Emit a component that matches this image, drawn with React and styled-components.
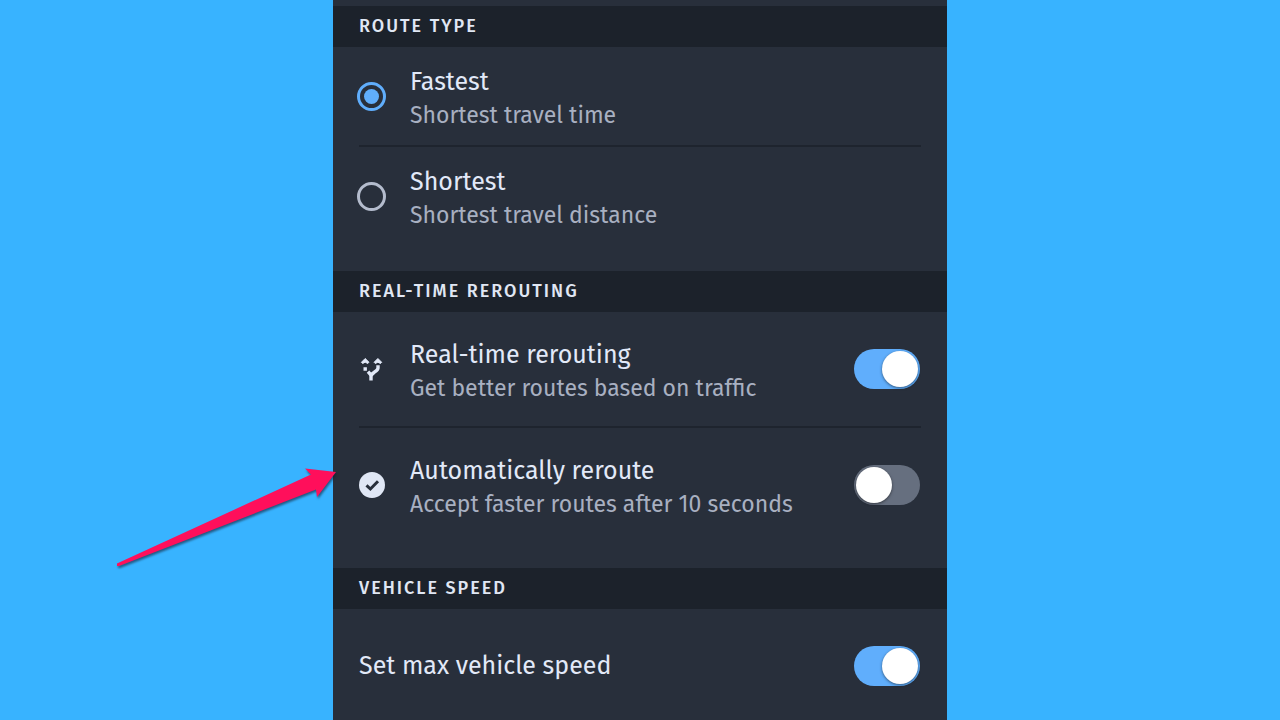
import React, { useState } from 'react';
import styled, { createGlobalStyle } from 'styled-components';

//STYLED COMPONENTS

const GlobalStyle = createGlobalStyle`
	* {
		box-sizing: border-box;
	}
	body {
		margin: 0;
		background: #38b3ff;
		font-family: "Fira Sans", "Noto Sans", "Open Sans", sans-serif;
	}
`;
const Page = styled.main`
	height: 100vh;
	display: flex;
	justify-content: center;
	overflow: hidden;
`;
const Panel = styled.div`
	position: relative;
	width: 100%;
	max-width: 614px;
	padding-top: 6px;
	background: #282f3b;
`;
const Section = styled.section`
	padding-bottom: 26px;
`;
const SectionTitle = styled.h2`
	margin: 0;
	padding: 0 26px;
	background: #1c222b;
	color: #e0e7f4;
	font-size: 18px;
	font-weight: 500;
	line-height: 41px;
	letter-spacing: 2px;
	text-transform: uppercase;
`;
const Row = styled.label`
	display: flex;
	align-items: center;
	gap: 24px;
	min-height: ${(props) => (props.$tall ? '114px' : '98px')};
	padding: 0 27px 0 ${(props) => (props.$plain ? '26px' : '24px')};
	cursor: pointer;
`;
const Divider = styled.hr`
	height: 2px;
	margin: 0 26px;
	border: 0;
	background: #1e242e;
`;
const IconSlot = styled.span`
	display: flex;
	justify-content: center;
	flex: 0 0 29px;
`;
const RowText = styled.span`
	flex: 1;
	display: flex;
	flex-direction: column;
	white-space: nowrap;
`;
const RowTitle = styled.span`
	color: #e2e9f8;
	font-size: 25px;
	line-height: 38px;
`;
const RowHint = styled.span`
	color: #a8b0c1;
	font-size: 23px;
	line-height: 28px;
`;
const Radio = styled.input`
	appearance: none;
	flex: 0 0 29px;
	height: 29px;
	margin: 0;
	display: grid;
	place-items: center;
	border: 3px solid #b4bccd;
	border-radius: 50%;

	&:checked {
		border-color: #60aefc;
	}
	&:checked::before {
		content: '';
		width: 15px;
		height: 15px;
		border-radius: 50%;
		background: #60aefc;
	}
`;
const Switch = styled.input`
	appearance: none;
	flex: 0 0 66px;
	height: 40px;
	margin: 0;
	padding: 2px;
	display: flex;
	align-items: center;
	border-radius: 20px;
	background: #666f7f;

	&::before {
		content: '';
		width: 36px;
		height: 36px;
		border-radius: 50%;
		background: #fff;
		box-shadow: 0 1px 3px rgba(0, 0, 0, 0.5);
	}
	&:checked {
		justify-content: flex-end;
		background: #60aefc;
	}
`;
const Arrow = styled.svg`
	position: absolute;
	top: 460px;
	left: -223px;
	pointer-events: none;
	filter: drop-shadow(1px 2px 1px rgba(20, 30, 50, 0.6));
`;

const RerouteIcon = () => (
	<svg width="24" height="24" viewBox="0 0 24 24" fill="none" stroke="#e2e9f8" aria-hidden="true">
		<g fill="#e2e9f8" strokeWidth="1" strokeLinejoin="round">
			<path d="M5.200 1.500 9 5.300 7.800 6.500 5.200 5.200 2.600 6.500 1.400 5.300z" />
			<path d="M17.900 1.500l3.800 3.800-1.200 1.200-2.600-1.300-2.600 1.300-1.200-1.200z" />
		</g>
		<path d="M5.200 10.300v3.400M8 14.700l3 3.300" strokeWidth="3.400" />
		<path d="M18 8.300V11c0 2-2.200 3.200-4 4.500-1.800 1.200-3 2.300-3 4V23.500" strokeWidth="3.400" />
	</svg>
);

const CheckIcon = () => (
	<svg width="26" height="26" viewBox="0 0 26 26" fill="none" aria-hidden="true">
		<circle cx="13" cy="13" r="13" fill="#e0e7f5" />
		<path d="m7.500 13.300 3.900 3.700L19 9.300" stroke="#282f3b" strokeWidth="3" />
	</svg>
);

function App (){
	const [ routeType, setRouteType ] = useState('fastest');
	const [ realTime, setRealTime ] = useState(true);
	const [ autoReroute, setAutoReroute ] = useState(false);
	const [ maxSpeed, setMaxSpeed ] = useState(true);

	return (
		<Page>
			<GlobalStyle />
			<Panel>
				<Section>
					<SectionTitle>Route type</SectionTitle>
					<Row>
						<Radio
							type="radio"
							name="routeType"
							checked={routeType === 'fastest'}
							onChange={() => setRouteType('fastest')}
						/>
						<RowText>
							<RowTitle>Fastest</RowTitle>
							<RowHint>Shortest travel time</RowHint>
						</RowText>
					</Row>
					<Divider />
					<Row>
						<Radio
							type="radio"
							name="routeType"
							checked={routeType === 'shortest'}
							onChange={() => setRouteType('shortest')}
						/>
						<RowText>
							<RowTitle>Shortest</RowTitle>
							<RowHint>Shortest travel distance</RowHint>
						</RowText>
					</Row>
				</Section>
				<Section>
					<SectionTitle>Real-time rerouting</SectionTitle>
					<Row $tall>
						<IconSlot>
							<RerouteIcon />
						</IconSlot>
						<RowText>
							<RowTitle>Real-time rerouting</RowTitle>
							<RowHint>Get better routes based on traffic</RowHint>
						</RowText>
						<Switch
							type="checkbox"
							role="switch"
							checked={realTime}
							onChange={(e) => setRealTime(e.target.checked)}
						/>
					</Row>
					<Divider />
					<Row $tall>
						<IconSlot>
							<CheckIcon />
						</IconSlot>
						<RowText>
							<RowTitle>Automatically reroute</RowTitle>
							<RowHint>Accept faster routes after 10 seconds</RowHint>
						</RowText>
						<Switch
							type="checkbox"
							role="switch"
							checked={autoReroute}
							onChange={(e) => setAutoReroute(e.target.checked)}
						/>
					</Row>
				</Section>
				<Section>
					<SectionTitle>Vehicle speed</SectionTitle>
					<Row $tall $plain>
						<RowText>
							<RowTitle>Set max vehicle speed</RowTitle>
						</RowText>
						<Switch
							type="checkbox"
							role="switch"
							checked={maxSpeed}
							onChange={(e) => setMaxSpeed(e.target.checked)}
						/>
					</Row>
				</Section>
				<Arrow width="230" height="112" viewBox="0 0 230 112" aria-hidden="true">
					<path
						d="M7 103.500 201 14.500 195 8.500 226 12 207 37 206 29.500 9 106 7 106z"
						fill="#ff0f5b"
					/>
				</Arrow>
			</Panel>
		</Page>
	);
}
export default App;
